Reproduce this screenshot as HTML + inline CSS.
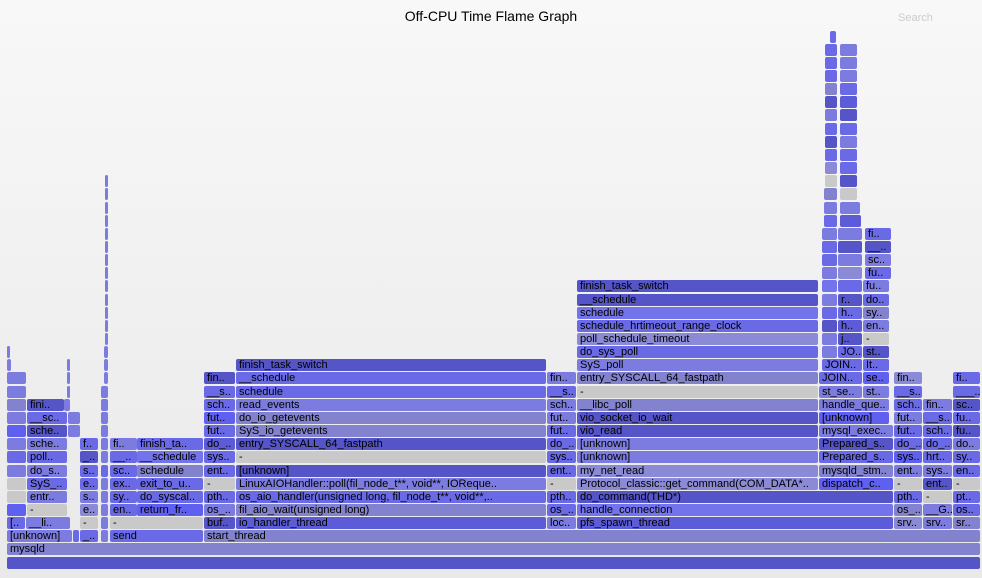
<!DOCTYPE html>
<html><head><meta charset="utf-8"><style>
*{margin:0;padding:0;box-sizing:border-box}
body{width:982px;height:578px;overflow:hidden;background:linear-gradient(#f8f8f8,#e9e9e9);font-family:"Liberation Sans",sans-serif;position:relative}
.t{position:absolute;top:8px;left:0;width:982px;text-align:center;font-size:14px;color:#000}
.s{position:absolute;top:12px;left:898px;font-size:11px;color:#ccc}
i{position:absolute;height:12px;font-style:normal;font-size:11px;line-height:12px;padding-left:3px;color:#000;white-space:nowrap;overflow:hidden;border-radius:2px;background:#6b6be0}
.l0{top:556.5px}.l1{top:543.4px}.l2{top:530.2px}.l3{top:517.1px}.l4{top:503.9px}.l5{top:490.8px}.l6{top:477.6px}.l7{top:464.5px}.l8{top:451.3px}.l9{top:438.2px}.l10{top:425px}.l11{top:411.9px}.l12{top:398.7px}.l13{top:385.6px}.l14{top:372.4px}.l15{top:359.3px}.l16{top:346.1px}.l17{top:333px}.l18{top:319.8px}.l19{top:306.7px}.l20{top:293.5px}.l21{top:280.4px}.l22{top:267.2px}.l23{top:254.1px}.l24{top:240.9px}.l25{top:227.8px}.l26{top:214.6px}.l27{top:201.5px}.l28{top:188.3px}.l29{top:175.2px}.l30{top:162px}.l31{top:148.9px}.l32{top:135.7px}.l33{top:122.6px}.l34{top:109.4px}.l35{top:96.3px}.l36{top:83.1px}.l37{top:70px}.l38{top:56.8px}.l39{top:43.7px}.l40{top:30.5px}
.a{background:#5555c8}.b{background:#6a6ae6}.c{background:#7c7ce0}.d{background:#8a8ad6}.e{background:#5c5cd8}.f{background:#7373ec}.g{background:#c9c9c9}.h{background:#8282cf}.k{background:#6060f0}
</style></head><body>
<div class="t">Off-CPU Time Flame Graph</div><div class="s">Search</div>
<i class="l0 a" style="left:7px;width:973px"></i>
<i class="l1 h" style="left:7px;width:973px">mysqld</i>
<i class="l2 c" style="left:7px;width:65px">[unknown]</i><i class="l2 b" style="left:73px;width:6px"></i><i class="l2 b" style="left:80px;width:18px">_..</i><i class="l2 c" style="left:101px;width:7px"></i><i class="l2 b" style="left:110px;width:93px">send</i><i class="l2 h" style="left:204px;width:776px">start_thread</i>
<i class="l3 b" style="left:7px;width:18px">[..</i><i class="l3 c" style="left:26px;width:44px">__li..</i><i class="l3 g" style="left:80px;width:18px">-</i><i class="l3 c" style="left:101px;width:7px"></i><i class="l3 g" style="left:110px;width:93px">-</i><i class="l3 a" style="left:204px;width:31px">buf..</i><i class="l3 e" style="left:236px;width:310px">io_handler_thread</i><i class="l3 c" style="left:547px;width:29px">loc..</i><i class="l3 e" style="left:577px;width:316px">pfs_spawn_thread</i><i class="l3 d" style="left:894px;width:28px">srv..</i><i class="l3 c" style="left:923px;width:29px">srv..</i><i class="l3 h" style="left:953px;width:27px">sr..</i>
<i class="l4 k" style="left:7px;width:19px"></i><i class="l4 g" style="left:27px;width:40px">-</i><i class="l4 d" style="left:80px;width:18px">e..</i><i class="l4 c" style="left:101px;width:7px"></i><i class="l4 b" style="left:110px;width:27px">en..</i><i class="l4 k" style="left:137px;width:66px">return_fr..</i><i class="l4 c" style="left:204px;width:31px">os_..</i><i class="l4 h" style="left:236px;width:310px">fil_aio_wait(unsigned long)</i><i class="l4 b" style="left:547px;width:29px">os_..</i><i class="l4 f" style="left:577px;width:316px">handle_connection</i><i class="l4 h" style="left:894px;width:28px">os_..</i><i class="l4 c" style="left:923px;width:29px">__G..</i><i class="l4 b" style="left:953px;width:27px">os..</i>
<i class="l5 g" style="left:7px;width:19px"></i><i class="l5 c" style="left:27px;width:40px">entr..</i><i class="l5 c" style="left:80px;width:18px">s..</i><i class="l5 c" style="left:101px;width:7px"></i><i class="l5 b" style="left:110px;width:27px">sy..</i><i class="l5 b" style="left:137px;width:66px">do_syscal..</i><i class="l5 b" style="left:204px;width:31px">pth..</i><i class="l5 b" style="left:236px;width:310px">os_aio_handler(unsigned long, fil_node_t**, void**,..</i><i class="l5 b" style="left:547px;width:29px">pth..</i><i class="l5 a" style="left:577px;width:316px">do_command(THD*)</i><i class="l5 b" style="left:894px;width:28px">pth..</i><i class="l5 g" style="left:923px;width:29px">-</i><i class="l5 b" style="left:953px;width:27px">pt..</i>
<i class="l6 g" style="left:7px;width:19px"></i><i class="l6 b" style="left:27px;width:40px">SyS_..</i><i class="l6 b" style="left:80px;width:18px">e..</i><i class="l6 c" style="left:101px;width:7px"></i><i class="l6 b" style="left:110px;width:27px">ex..</i><i class="l6 b" style="left:137px;width:66px">exit_to_u..</i><i class="l6 g" style="left:204px;width:31px">-</i><i class="l6 c" style="left:236px;width:310px">LinuxAIOHandler::poll(fil_node_t**, void**, IOReque..</i><i class="l6 g" style="left:547px;width:29px">-</i><i class="l6 d" style="left:577px;width:241px">Protocol_classic::get_command(COM_DATA*..</i><i class="l6 k" style="left:819px;width:74px">dispatch_c..</i><i class="l6 g" style="left:894px;width:28px">-</i><i class="l6 a" style="left:923px;width:29px">ent..</i><i class="l6 g" style="left:953px;width:27px">-</i>
<i class="l7 c" style="left:7px;width:19px"></i><i class="l7 c" style="left:27px;width:40px">do_s..</i><i class="l7 b" style="left:80px;width:18px">s..</i><i class="l7 b" style="left:101px;width:7px"></i><i class="l7 b" style="left:110px;width:27px">sc..</i><i class="l7 h" style="left:137px;width:66px">schedule</i><i class="l7 b" style="left:204px;width:31px">ent..</i><i class="l7 a" style="left:236px;width:310px">[unknown]</i><i class="l7 b" style="left:547px;width:29px">ent..</i><i class="l7 d" style="left:577px;width:241px">my_net_read</i><i class="l7 h" style="left:819px;width:74px">mysqld_stm..</i><i class="l7 c" style="left:894px;width:28px">ent..</i><i class="l7 c" style="left:923px;width:29px">sys..</i><i class="l7 b" style="left:953px;width:27px">en..</i>
<i class="l8 b" style="left:7px;width:19px"></i><i class="l8 b" style="left:27px;width:40px">poll..</i><i class="l8 a" style="left:80px;width:18px">_..</i><i class="l8 c" style="left:101px;width:7px"></i><i class="l8 b" style="left:110px;width:27px">__..</i><i class="l8 f" style="left:137px;width:66px">__schedule</i><i class="l8 b" style="left:204px;width:31px">sys..</i><i class="l8 g" style="left:236px;width:310px">-</i><i class="l8 b" style="left:547px;width:29px">sys..</i><i class="l8 c" style="left:577px;width:241px">[unknown]</i><i class="l8 b" style="left:819px;width:74px">Prepared_s..</i><i class="l8 k" style="left:894px;width:28px">sys..</i><i class="l8 b" style="left:923px;width:29px">hrt..</i><i class="l8 b" style="left:953px;width:27px">sy..</i>
<i class="l9 c" style="left:7px;width:19px"></i><i class="l9 c" style="left:27px;width:40px">sche..</i><i class="l9 b" style="left:80px;width:18px">f..</i><i class="l9 c" style="left:101px;width:7px"></i><i class="l9 c" style="left:110px;width:27px">fi..</i><i class="l9 b" style="left:137px;width:66px">finish_ta..</i><i class="l9 e" style="left:204px;width:31px">do_..</i><i class="l9 a" style="left:236px;width:310px">entry_SYSCALL_64_fastpath</i><i class="l9 b" style="left:547px;width:29px">do_..</i><i class="l9 c" style="left:577px;width:241px">[unknown]</i><i class="l9 a" style="left:819px;width:74px">Prepared_s..</i><i class="l9 b" style="left:894px;width:28px">do_..</i><i class="l9 b" style="left:923px;width:29px">do_..</i><i class="l9 c" style="left:953px;width:27px">do..</i>
<i class="l10 k" style="left:7px;width:19px"></i><i class="l10 a" style="left:27px;width:40px">sche..</i><i class="l10 c" style="left:68px;width:12px"></i><i class="l10 c" style="left:101px;width:7px"></i><i class="l10 b" style="left:204px;width:31px">fut..</i><i class="l10 h" style="left:236px;width:310px">SyS_io_getevents</i><i class="l10 b" style="left:547px;width:29px">fut..</i><i class="l10 a" style="left:577px;width:241px">vio_read</i><i class="l10 c" style="left:819px;width:74px">mysql_exec..</i><i class="l10 b" style="left:894px;width:28px">fut..</i><i class="l10 b" style="left:923px;width:29px">sch..</i><i class="l10 a" style="left:953px;width:27px">fu..</i>
<i class="l11 c" style="left:7px;width:19px"></i><i class="l11 b" style="left:27px;width:40px">__sc..</i><i class="l11 c" style="left:68px;width:12px"></i><i class="l11 c" style="left:101px;width:7px"></i><i class="l11 k" style="left:204px;width:31px">fut..</i><i class="l11 h" style="left:236px;width:310px">do_io_getevents</i><i class="l11 c" style="left:547px;width:29px">fut..</i><i class="l11 a" style="left:577px;width:241px">vio_socket_io_wait</i><i class="l11 k" style="left:819px;width:70px">[unknown]</i><i class="l11 c" style="left:894px;width:28px">fut..</i><i class="l11 b" style="left:923px;width:29px">__s..</i><i class="l11 b" style="left:953px;width:27px">fu..</i>
<i class="l12 h" style="left:7px;width:19px"></i><i class="l12 a" style="left:27px;width:37px">fini..</i><i class="l12 c" style="left:64px;width:6px"></i><i class="l12 c" style="left:101px;width:7px"></i><i class="l12 b" style="left:204px;width:31px">sch..</i><i class="l12 c" style="left:236px;width:310px">read_events</i><i class="l12 c" style="left:547px;width:29px">sch..</i><i class="l12 h" style="left:577px;width:241px">__libc_poll</i><i class="l12 c" style="left:819px;width:70px">handle_que..</i><i class="l12 b" style="left:894px;width:28px">sch..</i><i class="l12 c" style="left:923px;width:29px">fin..</i><i class="l12 a" style="left:953px;width:27px">sc..</i>
<i class="l13 c" style="left:7px;width:19px"></i><i class="l13 c" style="left:67px;width:3px"></i><i class="l13 c" style="left:101px;width:7px"></i><i class="l13 b" style="left:204px;width:31px">__s..</i><i class="l13 b" style="left:236px;width:310px">schedule</i><i class="l13 b" style="left:547px;width:29px">__s..</i><i class="l13 g" style="left:577px;width:241px">-</i><i class="l13 c" style="left:819px;width:43px">st_se..</i><i class="l13 c" style="left:863px;width:26px">st..</i><i class="l13 b" style="left:894px;width:28px">__s..</i><i class="l13 b" style="left:953px;width:27px">___..</i>
<i class="l14 c" style="left:7px;width:19px"></i><i class="l14 c" style="left:67px;width:3px"></i><i class="l14 c" style="left:104px;width:4px"></i><i class="l14 a" style="left:204px;width:31px">fin..</i><i class="l14 b" style="left:236px;width:310px">__schedule</i><i class="l14 c" style="left:547px;width:29px">fin..</i><i class="l14 h" style="left:577px;width:241px">entry_SYSCALL_64_fastpath</i><i class="l14 b" style="left:819px;width:43px">JOIN..</i><i class="l14 k" style="left:863px;width:26px">se..</i><i class="l14 d" style="left:894px;width:28px">fin..</i><i class="l14 b" style="left:953px;width:27px">fi..</i>
<i class="l15 c" style="left:7px;width:4px"></i><i class="l15 c" style="left:67px;width:3px"></i><i class="l15 c" style="left:104px;width:4px"></i><i class="l15 a" style="left:236px;width:310px">finish_task_switch</i><i class="l15 c" style="left:577px;width:241px">SyS_poll</i><i class="l15 b" style="left:822px;width:40px">JOIN..</i><i class="l15 b" style="left:863px;width:26px">It..</i>
<i class="l16 c" style="left:7px;width:3px"></i><i class="l16 c" style="left:104px;width:4px"></i><i class="l16 b" style="left:577px;width:241px">do_sys_poll</i><i class="l16 c" style="left:822px;width:15px"></i><i class="l16 b" style="left:838px;width:24px">JO..</i><i class="l16 a" style="left:863px;width:26px">st..</i>
<i class="l17 d" style="left:577px;width:241px">poll_schedule_timeout</i><i class="l17 c" style="left:822px;width:15px"></i><i class="l17 a" style="left:838px;width:24px">j..</i><i class="l17 g" style="left:863px;width:26px">-</i>
<i class="l18 b" style="left:577px;width:241px">schedule_hrtimeout_range_clock</i><i class="l18 a" style="left:822px;width:15px"></i><i class="l18 e" style="left:838px;width:24px">h..</i><i class="l18 c" style="left:863px;width:26px">en..</i>
<i class="l19 f" style="left:577px;width:241px">schedule</i><i class="l19 b" style="left:822px;width:15px"></i><i class="l19 b" style="left:838px;width:24px">h..</i><i class="l19 h" style="left:863px;width:26px">sy..</i>
<i class="l20 a" style="left:577px;width:241px">__schedule</i><i class="l20 c" style="left:822px;width:15px"></i><i class="l20 a" style="left:838px;width:24px">r..</i><i class="l20 b" style="left:863px;width:26px">do..</i>
<i class="l21 a" style="left:577px;width:241px">finish_task_switch</i><i class="l21 f" style="left:822px;width:15px"></i><i class="l21 b" style="left:838px;width:24px"></i><i class="l21 c" style="left:863px;width:26px">fu..</i>
<i class="l22 c" style="left:822px;width:15px"></i><i class="l22 d" style="left:838px;width:24px"></i><i class="l22 b" style="left:865px;width:26px">fu..</i>
<i class="l23 b" style="left:822px;width:15px"></i><i class="l23 c" style="left:838px;width:24px"></i><i class="l23 c" style="left:865px;width:26px">sc..</i>
<i class="l24 b" style="left:822px;width:15px"></i><i class="l24 a" style="left:838px;width:24px"></i><i class="l24 a" style="left:865px;width:26px">__..</i>
<i class="l25 c" style="left:822px;width:15px"></i><i class="l25 c" style="left:838px;width:24px"></i><i class="l25 b" style="left:865px;width:26px">fi..</i>
<i class="l26 b" style="left:824px;width:13px"></i><i class="l26 e" style="left:840px;width:21px"></i>
<i class="l27 c" style="left:824px;width:13px"></i><i class="l27 c" style="left:840px;width:20px"></i>
<i class="l28 h" style="left:824px;width:13px"></i><i class="l28 g" style="left:840px;width:17px"></i>
<i class="l29 g" style="left:825px;width:12px"></i><i class="l29 a" style="left:840px;width:17px"></i><i class="l29 c" style="left:105px;width:3px"></i>
<i class="l30 d" style="left:825px;width:12px"></i><i class="l30 b" style="left:840px;width:17px"></i>
<i class="l31 b" style="left:825px;width:12px"></i><i class="l31 b" style="left:840px;width:17px"></i>
<i class="l32 a" style="left:825px;width:12px"></i><i class="l32 c" style="left:840px;width:17px"></i>
<i class="l33 b" style="left:825px;width:12px"></i><i class="l33 b" style="left:840px;width:17px"></i>
<i class="l34 c" style="left:825px;width:12px"></i><i class="l34 a" style="left:840px;width:17px"></i>
<i class="l35 a" style="left:825px;width:12px"></i><i class="l35 e" style="left:840px;width:17px"></i>
<i class="l36 h" style="left:825px;width:12px"></i><i class="l36 b" style="left:840px;width:17px"></i>
<i class="l37 b" style="left:825px;width:12px"></i><i class="l37 c" style="left:840px;width:17px"></i>
<i class="l38 b" style="left:825px;width:12px"></i><i class="l38 c" style="left:840px;width:17px"></i>
<i class="l39 b" style="left:825px;width:12px"></i><i class="l39 c" style="left:840px;width:17px"></i>
<i class="l40 b" style="left:830px;width:6px"></i>
<i class="l17 c" style="left:105px;width:3px"></i><i class="l18 c" style="left:105px;width:3px"></i><i class="l19 c" style="left:105px;width:3px"></i><i class="l20 c" style="left:105px;width:3px"></i><i class="l21 c" style="left:105px;width:3px"></i><i class="l22 c" style="left:105px;width:3px"></i><i class="l23 c" style="left:105px;width:3px"></i><i class="l24 c" style="left:105px;width:3px"></i><i class="l25 c" style="left:105px;width:3px"></i><i class="l26 c" style="left:105px;width:3px"></i><i class="l27 c" style="left:105px;width:3px"></i><i class="l28 c" style="left:105px;width:3px"></i>
</body></html>
